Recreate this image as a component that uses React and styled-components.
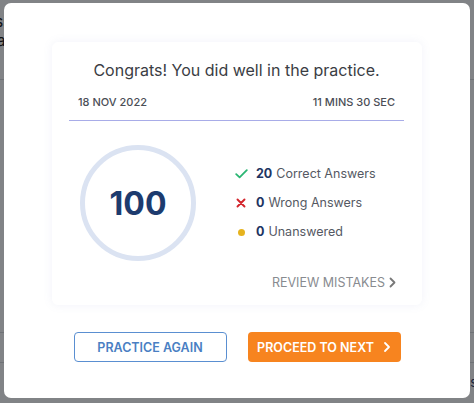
import styled, { createGlobalStyle } from "styled-components";

const GlobalStyle = createGlobalStyle`
  html, body {
    margin: 0;
    padding: 0;
    background: #fcfdff;
    font-family: Inter, "Liberation Sans", sans-serif;
  }
`;

const App = () => {
  return (
    <>
      <GlobalStyle />
      <Page>
        <PageHeader>
          <p>Progress</p>
          <p>Everyday</p>
          <p>Results</p>
        </PageHeader>
        <PageRows>
          <div />
          <div />
          <span>s</span>
        </PageRows>
      </Page>
      <Overlay>
        <Modal>
          <Card>
            <Title>Congrats! You did well in the practice.</Title>
            <MetaRow>
              <span>18 NOV 2022</span>
              <span>11 MINS 30 SEC</span>
            </MetaRow>
            <ScoreArea>
              <ScoreRing>100</ScoreRing>
              <Stats>
                <Stat>
                  <IconBox>
                    <svg width="13" height="10" viewBox="0 0 13 10">
                      <path d="M1.2 5.2 L4.6 8.4 L11.8 1.2" fill="none" stroke="#2bb673" strokeWidth="1.8" strokeLinecap="round" strokeLinejoin="round" />
                    </svg>
                  </IconBox>
                  <b>20</b> Correct Answers
                </Stat>
                <Stat>
                  <IconBox>
                    <svg width="10" height="10" viewBox="0 0 10 10">
                      <path d="M1.5 1.5 L8.5 8.5 M8.5 1.5 L1.5 8.5" fill="none" stroke="#d3242b" strokeWidth="1.9" strokeLinecap="round" />
                    </svg>
                  </IconBox>
                  <b>0</b> Wrong Answers
                </Stat>
                <Stat>
                  <IconBox>
                    <Dot />
                  </IconBox>
                  <b>0</b> Unanswered
                </Stat>
              </Stats>
            </ScoreArea>
            <ReviewLink>
              REVIEW MISTAKES
              <svg width="7" height="11" viewBox="0 0 7 11">
                <path d="M1.5 1.5 L5.5 5.5 L1.5 9.5" fill="none" stroke="#777" strokeWidth="1.8" strokeLinecap="round" strokeLinejoin="round" />
              </svg>
            </ReviewLink>
          </Card>
          <Actions>
            <Button>PRACTICE AGAIN</Button>
            <Button primary>
              PROCEED TO NEXT
              <svg width="8" height="12" viewBox="0 0 8 12">
                <path d="M2 2 L6 6 L2 10" fill="none" stroke="#fff" strokeWidth="1.8" strokeLinecap="round" strokeLinejoin="round" />
              </svg>
            </Button>
          </Actions>
        </Modal>
      </Overlay>
    </>
  );
};

const Page = styled.div`
  height: 403px;
  overflow: hidden;
  display: flex;
  flex-direction: column;
`;

const PageHeader = styled.div`
  height: 80px;
  box-sizing: border-box;
  padding: 12px 0 0 0;
  border-bottom: 1px solid #d8dbe0;
  p {
    margin: 0;
    font-size: 15px;
    line-height: 19px;
    color: #222;
    transform: translateX(-52px);
  }
`;

const PageRows = styled.div`
  margin-top: 252px;
  display: flex;
  flex-direction: column;
  div {
    height: 29px;
    border-top: 1px solid #d8dbe0;
  }
  span {
    align-self: flex-end;
    margin-top: -18px;
    margin-right: -3px;
    font-size: 13px;
    color: #2a3c6b;
  }
`;

const Overlay = styled.div`
  position: fixed;
  inset: 0;
  background: rgba(2, 4, 8, 0.49);
  display: flex;
  justify-content: center;
  align-items: flex-start;
  padding-top: 3px;
`;

const Modal = styled.div`
  width: 466px;
  height: 395px;
  box-sizing: border-box;
  background: #fff;
  border-radius: 7px;
  padding: 39px 48px 0;
  display: flex;
  flex-direction: column;
`;

const Card = styled.div`
  height: 263px;
  box-sizing: border-box;
  background: #fff;
  border-radius: 6px;
  box-shadow: 0 0 10px rgba(120, 130, 200, 0.1);
  padding: 16px 18px 0 17px;
  display: flex;
  flex-direction: column;
`;

const Title = styled.h2`
  margin: 0;
  text-align: center;
  font-size: 16px;
  line-height: 24px;
  font-weight: 400;
  color: #3a3d44;
`;

const MetaRow = styled.div`
  margin-top: 13px;
  display: flex;
  justify-content: space-between;
  padding: 0 9px 0 9px;
  height: 25px;
  border-bottom: 1px solid #a8ace8;
  font-size: 11px;
  font-weight: 500;
  line-height: 14px;
  color: #4b4e56;
`;

const ScoreArea = styled.div`
  margin-top: 24px;
  display: flex;
  align-items: center;
  padding-left: 11px;
`;

const ScoreRing = styled.div`
  width: 116px;
  height: 116px;
  box-sizing: border-box;
  border: 5px solid #dbe3f2;
  border-radius: 50%;
  display: flex;
  align-items: center;
  justify-content: center;
  font-size: 32px;
  font-weight: 700;
  color: #1d3b6e;
`;

const Stats = styled.div`
  margin-left: 38px;
  display: flex;
  flex-direction: column;
  gap: 11px;
`;

const Stat = styled.div`
  display: flex;
  align-items: center;
  font-size: 12.5px;
  line-height: 18px;
  color: #555963;
  b {
    font-weight: 700;
    color: #1e3462;
    margin-right: 4px;
  }
`;

const IconBox = styled.span`
  width: 14px;
  margin-right: 8px;
  display: flex;
  justify-content: center;
  align-items: center;
`;

const Dot = styled.span`
  width: 7px;
  height: 7px;
  border-radius: 50%;
  background: #e6b31e;
`;

const ReviewLink = styled.div`
  margin-top: 14px;
  align-self: flex-end;
  display: flex;
  align-items: center;
  gap: 4px;
  padding-right: 8px;
  font-size: 12.5px;
  color: #888b90;
`;

const Actions = styled.div`
  margin-top: 27px;
  display: flex;
  justify-content: center;
  gap: 21px;
`;

const Button = styled.button`
  width: 153px;
  height: 30px;
  box-sizing: border-box;
  border-radius: 4px;
  font-family: Inter, "Liberation Sans", sans-serif;
  font-size: 12.5px;
  font-weight: 600;
  display: flex;
  align-items: center;
  justify-content: center;
  gap: 9px;
  cursor: pointer;
  border: ${(p) => (p.primary ? "none" : "1.5px solid #5a8fd1")};
  background: ${(p) => (p.primary ? "#f7841f" : "#fff")};
  color: ${(p) => (p.primary ? "#fff" : "#4a7fc3")};
`;

export default App;
